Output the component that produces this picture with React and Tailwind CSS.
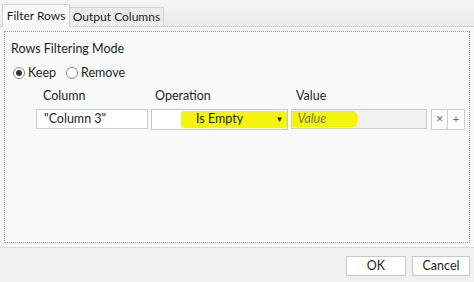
import React, { useState } from 'react';

const Radio = ({ checked, label, onClick }) => (
  <label onClick={onClick} className="flex items-center gap-[3px] cursor-pointer">
    <span className="w-[12px] h-[12px] rounded-full border border-[#8a8a8a] bg-white flex items-center justify-center">
      {checked && <span className="w-[6px] h-[6px] rounded-full bg-[#333]" />}
    </span>
    <span>{label}</span>
  </label>
);

const App = () => {
  const [mode, setMode] = useState('keep');

  return (
    <div
      className="w-[474px] h-[282px] flex flex-col bg-[#f0f0f0] text-[12.5px] text-[#1e1e1e] overflow-hidden"
      style={{ fontFamily: 'Lato, "Open Sans", sans-serif' }}
    >
      {/* tabs */}
      <div className="h-[27px] flex items-end pl-[2px] text-[12px] border-b border-[#cfcfcf] bg-gradient-to-b from-[#f5f5f5] to-[#ececec]">
        <div className="h-[23px] w-[68px] bg-[#f9f9f9] border border-b-0 border-[#d4d4d4] -mb-px flex items-center justify-center">
          Filter Rows
        </div>
        <div className="h-[19px] w-[94px] bg-[#ececec] border border-l-0 border-b-0 border-[#d4d4d4] flex items-center justify-center">
          Output Columns
        </div>
      </div>

      {/* panel */}
      <div className="h-[221px] bg-[#f9f9f9] pt-[4px] px-[4px] pb-[4px] border-b border-[#d8d8d8]">
        <div className="h-full border border-dotted border-[#9a9a9a] pl-[6px] pr-[4px] pt-[9px]">
          <div className="leading-[16px]">Rows Filtering Mode</div>
          <div className="flex items-center gap-[10px] mt-[8px] pl-[2px] leading-[16px]">
            <Radio checked={mode === 'keep'} label="Keep" onClick={() => setMode('keep')} />
            <Radio checked={mode === 'remove'} label="Remove" onClick={() => setMode('remove')} />
          </div>

          <div className="flex mt-[7px] pl-[32px] leading-[16px]">
            <div className="w-[112px]">Column</div>
            <div className="w-[141px]">Operation</div>
            <div>Value</div>
          </div>

          <div className="flex items-center mt-[5px] pl-[25px] h-[20px]">
            <div className="w-[112px] h-[20px] bg-white border border-[#cdcdcd] pl-[7px] flex items-center">
              "Column 3"
            </div>
            <div className="relative w-[138px] h-[21px] ml-[3px] bg-white border border-[#c4c4c4] flex items-center">
              <span className="absolute left-[29px] right-0 top-[1px] bottom-[1px] bg-[#f5f50c] rounded-[3px]" />
              <span className="relative flex-1 text-center pl-[12px]">Is Empty</span>
              <span className="relative mr-[4px] text-[8px]">▼</span>
            </div>
            <div className="relative w-[136px] h-[20px] ml-[3px] bg-[#f0f0f0] border border-[#cdcdcd] flex items-center">
              <span className="absolute left-0 w-[66px] top-[1px] bottom-[1px] bg-[#f5f50c] rounded-r-[6px]" />
              <span className="relative pl-[5px] italic text-[#7d7d4e]">Value</span>
            </div>
            <button className="w-[17px] h-[21px] ml-[4px] bg-white border border-[#cdcdcd] text-[9px] text-[#666] flex items-center justify-center">
              ✕
            </button>
            <button className="w-[17px] h-[21px] bg-white border border-l-0 border-[#cdcdcd] text-[11px] text-[#666] flex items-center justify-center">
              +
            </button>
          </div>
        </div>
      </div>

      {/* footer */}
      <div className="flex-1 flex justify-end items-start pt-[8px] gap-[6px] pr-[4px]">
        <button className="w-[60px] h-[20px] bg-white border border-[#c8c8c8] leading-none">OK</button>
        <button className="w-[58px] h-[20px] bg-white border border-[#c8c8c8] leading-none">Cancel</button>
      </div>
    </div>
  );
};

export default App;
